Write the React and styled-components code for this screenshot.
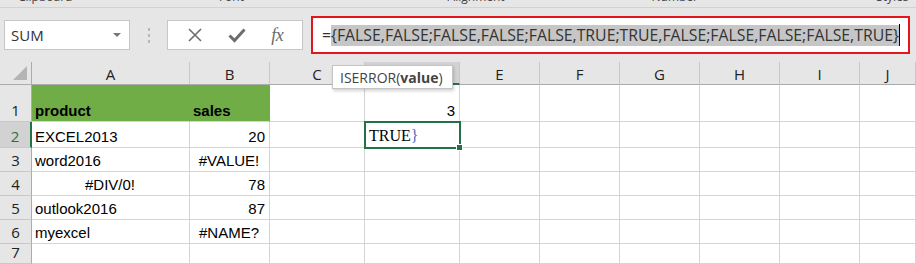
import React from "react";
import styled, { createGlobalStyle, css } from "styled-components";

const GlobalStyle = createGlobalStyle`
  html, body {
    margin: 0;
    padding: 0;
    background: #e6e6e6;
  }
  body {
    width: 916px;
    height: 264px;
    overflow: hidden;
    font-family: "Open Sans", "Noto Sans", sans-serif;
  }
`;

const Page = styled.div`
  width: 916px;
  height: 264px;
  overflow: hidden;
  background: #e6e6e6;
`;

const RibbonStrip = styled.div`
  height: 7px;
  border-bottom: 1px solid #d2d2d2;
  overflow: hidden;
  position: relative;
`;

const RibbonLabels = styled.div`
  display: flex;
  margin-top: -11px;
  font-size: 12px;
  color: #444;
  line-height: 16px;
  white-space: nowrap;
`;

const RibbonLabel = styled.span`
  width: ${(p) => p.$w}px;
  padding-left: ${(p) => p.$pl || 0}px;
  box-sizing: border-box;
`;

const FormulaBar = styled.div`
  height: 54px;
  display: flex;
  align-items: center;
  padding-left: 4px;
`;

const NameBox = styled.div`
  width: 126px;
  height: 30px;
  box-sizing: border-box;
  background: #fff;
  border: 1px solid #c6c6c6;
  display: flex;
  align-items: center;
  justify-content: space-between;
  padding: 0 8px 0 6px;
  font-size: 15px;
  color: #333;
`;

const Caret = styled.span`
  width: 0;
  height: 0;
  border-left: 4px solid transparent;
  border-right: 4px solid transparent;
  border-top: 4px solid #777;
`;

const Grip = styled.div`
  width: 2px;
  margin: 0 17px 0 18px;
  display: flex;
  flex-direction: column;
  gap: 3px;
  span {
    width: 2px;
    height: 3px;
    background: #b8b8b8;
  }
`;

const ButtonBox = styled.div`
  width: 136px;
  height: 30px;
  box-sizing: border-box;
  background: #fff;
  border: 1px solid #c6c6c6;
  display: flex;
  align-items: center;
  justify-content: space-around;
  padding: 0 6px;
`;

const Fx = styled.span`
  font-family: "Liberation Serif", serif;
  font-style: italic;
  font-size: 18px;
  color: #6a6a6a;
  letter-spacing: -0.5px;
`;

const FormulaBox = styled.div`
  margin-left: 8px;
  width: 599px;
  height: 38px;
  box-sizing: border-box;
  background: #fff;
  border: 2px solid #e3151d;
  display: flex;
  align-items: center;
  padding-left: 9px;
  font-size: 15.8px;
  color: #333;
  white-space: nowrap;
`;

const Selected = styled.span`
  background: #c6c6c6;
  line-height: 21px;
`;

const Cursor = styled.span`
  width: 1px;
  height: 22px;
  background: #000;
`;

const Sheet = styled.div`
  position: relative;
  display: grid;
  grid-template-columns: 32px 158px 80px 95px 95px 80px 80px 80px 80px 80px 56px;
  grid-template-rows: 23px 37px 26px 24px 24px 24px 24px 20px;
  background: #fff;
`;

const Corner = styled.div`
  background: #e6e6e6;
  border-right: 1px solid #ababab;
  border-bottom: 1px solid #ababab;
  box-sizing: border-box;
  display: flex;
  align-items: flex-end;
  justify-content: flex-end;
  padding: 0 4px 4px 0;
  span {
    width: 0;
    height: 0;
    border-left: 14px solid transparent;
    border-bottom: 14px solid #b4b4b4;
  }
`;

const ColHead = styled.div`
  box-sizing: border-box;
  background: ${(p) => (p.$sel ? "#d2d2d2" : "#e6e6e6")};
  border-right: 1px solid #c8c8c8;
  border-bottom: ${(p) => (p.$sel ? "2px solid #217346" : "1px solid #ababab")};
  display: flex;
  align-items: center;
  justify-content: center;
  font-size: 15px;
  color: #222;
  padding-top: 2px;
`;

const RowHead = styled.div`
  box-sizing: border-box;
  background: ${(p) => (p.$sel ? "#d2d2d2" : "#e6e6e6")};
  border-right: ${(p) => (p.$sel ? "2px solid #217346" : "1px solid #ababab")};
  border-bottom: 1px solid #c8c8c8;
  display: flex;
  align-items: flex-end;
  justify-content: center;
  padding-bottom: 1px;
  font-size: 15px;
  color: ${(p) => (p.$sel ? "#217346" : "#222")};
`;

const Cell = styled.div`
  box-sizing: border-box;
  position: relative;
  background: ${(p) => (p.$fill ? "#70ad47" : "#fff")};
  border-right: 1px solid ${(p) => (p.$fill ? "#70ad47" : "#d4d4d4")};
  border-bottom: 1px solid #d4d4d4;
  display: flex;
  align-items: flex-end;
  justify-content: ${(p) =>
    p.$align === "right" ? "flex-end" : p.$align === "center" ? "center" : "flex-start"};
  padding: 0 4px 2px 3px;
  font-family: "Liberation Sans", Arial, sans-serif;
  font-size: 15px;
  font-weight: ${(p) => (p.$bold ? 700 : 400)};
  color: #000;
  white-space: nowrap;
  ${(p) =>
    p.$active &&
    css`
      outline: 2px solid #217346;
      outline-offset: -1px;
      z-index: 2;
      &::after {
        content: "";
        position: absolute;
        right: -4px;
        bottom: -4px;
        width: 5px;
        height: 5px;
        background: #217346;
        border: 1px solid #fff;
      }
    `}
`;

const SerifText = styled.span`
  font-family: "Liberation Serif", serif;
  font-size: 16px;
  margin-left: 1px;
  b {
    font-weight: 400;
    color: #4472c4;
  }
`;

const Tooltip = styled.div`
  position: absolute;
  left: 332px;
  top: 3px;
  width: 121px;
  height: 24px;
  box-sizing: border-box;
  background: #fff;
  border: 1px solid #c4c4c4;
  box-shadow: 1px 2px 3px rgba(0, 0, 0, 0.18);
  display: flex;
  align-items: center;
  padding-left: 7px;
  font-size: 14px;
  color: #444;
  z-index: 3;
  b {
    font-weight: 700;
  }
`;

const columns = ["A", "B", "C", "D", "E", "F", "G", "H", "I", "J"];

const rows = [
  [
    { t: "product", bold: true, fill: true },
    { t: "sales", bold: true, fill: true },
    {},
    { t: "3", align: "right" },
  ],
  [{ t: "EXCEL2013" }, { t: "20", align: "right" }, {}, { active: true }],
  [{ t: "word2016" }, { t: "#VALUE!", align: "center" }],
  [{ t: "#DIV/0!", align: "center" }, { t: "78", align: "right" }],
  [{ t: "outlook2016" }, { t: "87", align: "right" }],
  [{ t: "myexcel" }, { t: "#NAME?", align: "center" }],
  [],
];

const CrossIcon = () => (
  <svg width="16" height="16" viewBox="0 0 16 16">
    <path d="M2 2 L14 14 M14 2 L2 14" stroke="#6d6d6d" strokeWidth="1.6" fill="none" />
  </svg>
);

const CheckIcon = () => (
  <svg width="18" height="16" viewBox="0 0 18 16">
    <path d="M1.5 8.5 L6.5 13.5 L16.5 2.5" stroke="#6d6d6d" strokeWidth="3" fill="none" />
  </svg>
);

export default function App() {
  return (
    <Page>
      <GlobalStyle />
      <RibbonStrip>
        <RibbonLabels>
          <RibbonLabel $w={220} $pl={18}>Clipboard</RibbonLabel>
          <RibbonLabel $w={227}>Font</RibbonLabel>
          <RibbonLabel $w={206} $pl={3}>Alignment</RibbonLabel>
          <RibbonLabel $w={228} $pl={2}>Number</RibbonLabel>
          <RibbonLabel $w={40}>Styles</RibbonLabel>
        </RibbonLabels>
      </RibbonStrip>
      <FormulaBar>
        <NameBox>
          SUM
          <Caret />
        </NameBox>
        <Grip>
          <span />
          <span />
          <span />
        </Grip>
        <ButtonBox>
          <CrossIcon />
          <CheckIcon />
          <Fx>fx</Fx>
        </ButtonBox>
        <FormulaBox>
          =
          <Selected>
            {"{FALSE,FALSE;FALSE,FALSE;FALSE,TRUE;TRUE,FALSE;FALSE,FALSE;FALSE,TRUE}"}
          </Selected>
          <Cursor />
        </FormulaBox>
      </FormulaBar>
      <Sheet>
        <Corner>
          <span />
        </Corner>
        {columns.map((c) => (
          <ColHead key={c} $sel={c === "D"}>
            {c}
          </ColHead>
        ))}
        {rows.map((r, i) => (
          <React.Fragment key={i}>
            <RowHead $sel={i === 1}>{i + 1}</RowHead>
            {columns.map((c, j) => {
              const d = r[j] || {};
              return (
                <Cell
                  key={c}
                  $fill={d.fill}
                  $bold={d.bold}
                  $align={d.align}
                  $active={d.active}
                >
                  {d.active ? (
                    <SerifText>
                      TRUE<b>{"}"}</b>
                    </SerifText>
                  ) : (
                    d.t
                  )}
                </Cell>
              );
            })}
          </React.Fragment>
        ))}
        <Tooltip>
          ISERROR(<b>value</b>)
        </Tooltip>
      </Sheet>
    </Page>
  );
}
